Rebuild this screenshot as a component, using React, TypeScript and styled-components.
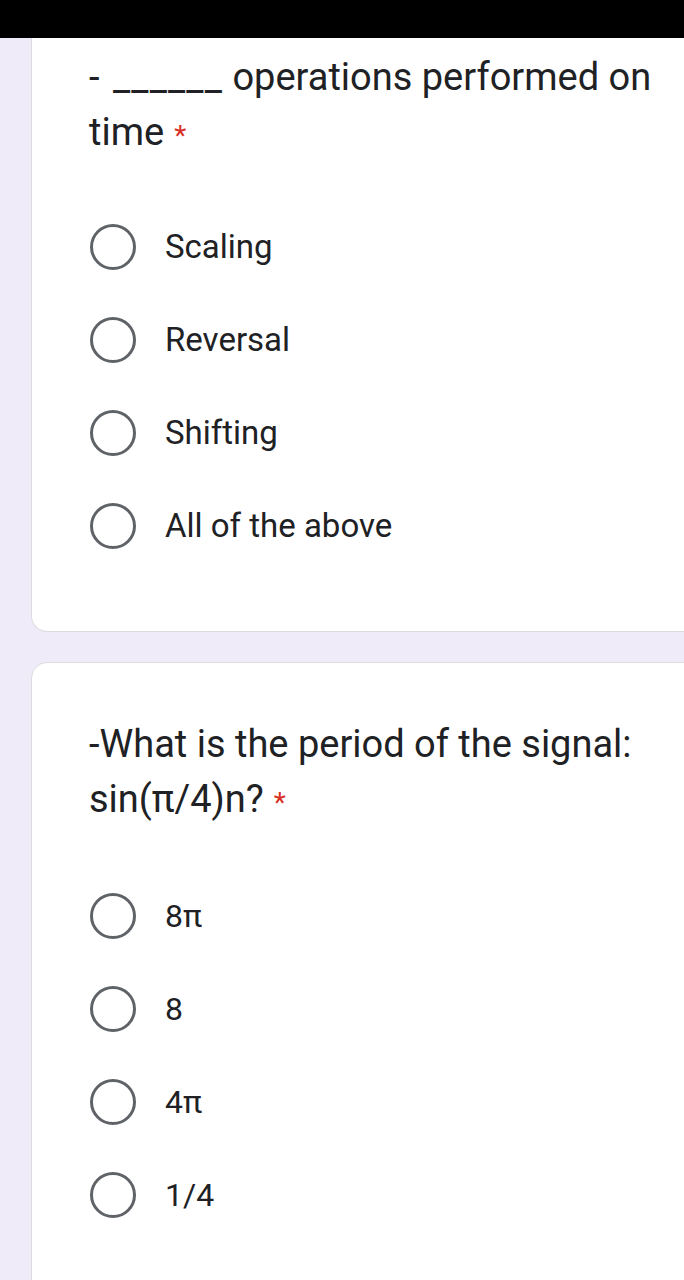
import styled, { createGlobalStyle } from 'styled-components'

const GlobalStyle = createGlobalStyle`
  html, body {
    margin: 0;
    padding: 0;
    background: #f0ebf8;
    font-family: Roboto, "Liberation Sans", Arial, sans-serif;
    overflow-x: hidden;
  }
`

const Page = styled.div`
  display: flex;
  flex-direction: column;
  min-height: 1280px;
  background: #f0ebf8;
`

const TopBar = styled.div`
  height: 38px;
  background: #000;
  flex-shrink: 0;
`

const Cards = styled.div`
  display: flex;
  flex-direction: column;
  gap: 30px;
  padding-left: 31px;
`

const Card = styled.div<{ $cut?: boolean; $top: number; $bottom: number }>`
  background: #fff;
  margin-right: -24px;
  border: 1px solid #dadce0;
  border-top: ${(p) => (p.$cut ? 'none' : '1px solid #dadce0')};
  border-radius: ${(p) => (p.$cut ? '0 0 16px 16px' : '16px 16px 0 0')};
  padding: ${(p) => p.$top}px 40px ${(p) => p.$bottom}px 57px;
`

const Title = styled.div<{ $gap: number }>`
  font-size: 38px;
  line-height: 55px;
  color: #202124;
  margin-bottom: ${(p) => p.$gap}px;
`

const Blank = styled.span`
  letter-spacing: 1.2px;
  margin-left: 4px;
`

const Star = styled.span`
  color: #d93025;
  font-size: 28px;
  line-height: 1;
  margin-left: 10px;
`

const Options = styled.div`
  display: flex;
  flex-direction: column;
`

const Option = styled.label`
  display: flex;
  align-items: center;
  height: 93px;
  gap: 29px;
  padding-left: 1px;
`

const Radio = styled.span`
  width: 46px;
  height: 46px;
  box-sizing: border-box;
  border: 3px solid #5f6368;
  border-radius: 50%;
  flex-shrink: 0;
`

const OptionText = styled.span<{ $size: number }>`
  font-size: ${(p) => p.$size}px;
  color: #202124;
`

const App = () => {
  return (
    <Page>
      <GlobalStyle />
      <TopBar />
      <Cards>
        <Card $cut $top={12} $bottom={59}>
          <Title $gap={40}>
            - <Blank>______</Blank> operations performed on time
            <Star>*</Star>
          </Title>
          <Options>
            {['Scaling', 'Reversal', 'Shifting', 'All of the above'].map((o) => (
              <Option key={o}>
                <Radio />
                <OptionText $size={33}>{o}</OptionText>
              </Option>
            ))}
          </Options>
        </Card>
        <Card $top={54} $bottom={78}>
          <Title $gap={42}>
            -What is the period of the signal: sin(π/4)n?
            <Star>*</Star>
          </Title>
          <Options>
            {['8π', '8', '4π', '1/4'].map((o) => (
              <Option key={o}>
                <Radio />
                <OptionText $size={32}>{o}</OptionText>
              </Option>
            ))}
          </Options>
        </Card>
      </Cards>
    </Page>
  )
}

export default App
